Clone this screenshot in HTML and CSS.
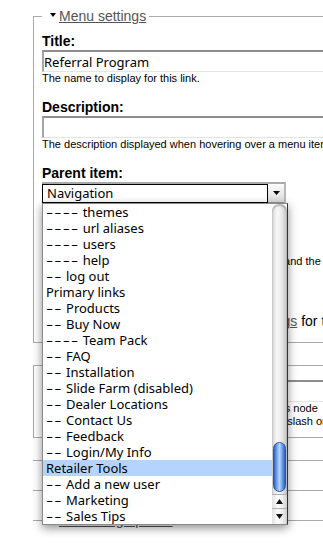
FILE: index.html
```html
<!DOCTYPE html>
<html lang="en">
<head>
    <meta charset="UTF-8">
    <meta name="viewport" content="width=device-width, initial-scale=1.0">
    <title>Menu settings</title>
    <link rel="stylesheet" href="styles.css">
</head>
<body>

    <div class="page">

        <fieldset class="group">
            <legend><a href="#">Menu settings</a></legend>

            <div class="field">
                <label for="title">Title:</label>
                <input type="text" id="title" class="form-text" value="Referral Program">
                <div class="description">The name to display for this link.</div>
            </div>

            <div class="field">
                <label for="desc">Description:</label>
                <input type="text" id="desc" class="form-text" value="">
                <div class="description">The description displayed when hovering over a menu item.</div>
            </div>

            <div class="field">
                <label>Parent item:</label>
                <div class="select-wrap">
                    <div class="select">
                        <span class="select-value">Navigation</span>
                        <span class="select-btn">
                            <svg width="7" height="4" viewBox="0 0 7 4"><path d="M0 0H7L3.5 4Z" fill="#000"/></svg>
                        </span>
                    </div>

                    <!-- Liste déroulante ouverte -->
                    <div class="popup">
                        <ul class="options">
                            <li><span class="dash">----</span> themes</li>
                            <li><span class="dash">----</span> url aliases</li>
                            <li><span class="dash">----</span> users</li>
                            <li><span class="dash">----</span> help</li>
                            <li><span class="dash">--</span> log out</li>
                            <li>Primary links</li>
                            <li><span class="dash">--</span> Products</li>
                            <li><span class="dash">--</span> Buy Now</li>
                            <li><span class="dash">----</span> Team Pack</li>
                            <li><span class="dash">--</span> FAQ</li>
                            <li><span class="dash">--</span> Installation</li>
                            <li><span class="dash">--</span> Slide Farm (disabled)</li>
                            <li><span class="dash">--</span> Dealer Locations</li>
                            <li><span class="dash">--</span> Contact Us</li>
                            <li><span class="dash">--</span> Feedback</li>
                            <li><span class="dash">--</span> Login/My Info</li>
                            <li class="selected">Retailer Tools</li>
                            <li><span class="dash">--</span> Add a new user</li>
                            <li><span class="dash">--</span> Marketing</li>
                            <li><span class="dash">--</span> Sales Tips</li>
                        </ul>
                        <div class="scrollbar">
                            <div class="track">
                                <div class="thumb"></div>
                            </div>
                            <div class="arrow arrow-up">
                                <svg width="7" height="5" viewBox="0 0 7 5"><path d="M0 5H7L3.5 0Z" fill="#111"/></svg>
                            </div>
                            <div class="arrow arrow-down">
                                <svg width="7" height="5" viewBox="0 0 7 5"><path d="M0 0H7L3.5 5Z" fill="#111"/></svg>
                            </div>
                        </div>
                    </div>
                </div>
            </div>

            <div class="field">
                <label>Weight:</label>
                <div class="select select-small">
                    <span class="select-value">0</span>
                    <span class="select-btn"></span>
                </div>
                <div class="description">Optional. In the menu, the heavier items will sink, and the lighter items will be positioned nearer the top.</div>
            </div>

            <div class="field">
                <label class="option"><input type="checkbox"> Delete</label>
            </div>

            <p class="note">Reorder these items in the <a href="#">menu settings</a> for this site.</p>
        </fieldset>

        <fieldset class="group group-path">
            <legend><a href="#">URL path settings</a></legend>
            <input type="text" class="form-text" value="">
            <div class="description">Optionally, specify an alternative URL by which this node<br>can be accessed, and please do not add a trailing slash or the URL alias won't work.</div>
        </fieldset>

        <fieldset class="group collapsed">
            <legend><a href="#">Comment settings</a></legend>
        </fieldset>

        <fieldset class="group collapsed">
            <legend><a href="#">Authoring information</a></legend>
        </fieldset>

        <fieldset class="group collapsed">
            <legend><a href="#">Publishing options</a></legend>
        </fieldset>

    </div>

</body>
</html>
```

FILE: styles.css
```css
/* Page de base */
html, body {
    margin: 0;
    overflow: hidden;
    background: #fff;
}

body {
    font-family: "Liberation Sans", Arial, sans-serif;
    font-size: 14px;
    line-height: 17px;
    color: #000;
}

.page {
    width: 700px;
    padding: 8px 0 0 33px;
}

/* Fieldsets */
.group {
    margin: 0 0 14px;
    padding: 9px 0 9px 8px;
    border: 1px solid #aaa;
    min-width: 0;
}

.group legend {
    padding: 0 3px 0 8px;
    font-size: 14px;
    line-height: 16px;
}

.group legend::before {
    content: "";
    display: inline-block;
    border-left: 3px solid transparent;
    border-right: 3px solid transparent;
    border-top: 4px solid #000;
    margin-right: 3px;
    vertical-align: 4px;
}

.group legend a {
    color: #555;
    text-decoration: underline;
}

.group-path {
    padding-top: 7px;
}

.group.collapsed {
    border-width: 1px 0 0;
    padding: 0 0 0 9px;
}

.group.collapsed legend::before {
    border-top: 3px solid transparent;
    border-bottom: 3px solid transparent;
    border-left: 4px solid #000;
    border-right: 0;
    margin-right: 5px;
    vertical-align: 3px;
}

/* Champs */
.field + .field {
    margin-top: 14px;
}

label {
    display: block;
    font-weight: bold;
    line-height: 17px;
}

label.option {
    font-weight: normal;
    height: 17px;
}

.form-text {
    display: block;
    box-sizing: border-box;
    width: 560px;
    height: 22px;
    margin: 0;
    padding: 0;
    border-style: solid;
    border-width: 2px 1px 1px 2px;
    border-color: #8e8e8e #c8c8c8 #e4e4e4 #a6a6a6;
    background: #fff;
    font-family: "Noto Sans", sans-serif;
    font-size: 13px;
    color: #000;
    outline: none;
}

.description {
    font-size: 11px;
    line-height: 13px;
    white-space: nowrap;
}

.note {
    margin: 14px 0 3px;
    white-space: nowrap;
}

.note a {
    color: #555;
    text-decoration: underline;
}

/* Liste déroulante */
.select-wrap {
    position: relative;
    width: 244px;
}

.select {
    display: flex;
    box-sizing: border-box;
    height: 21px;
    width: 244px;
    border-top: 2px solid #a9a9a9;
    border-right: 2px solid #b8b8b8;
}

.select-small {
    width: 60px;
}

.select-value {
    flex: 1;
    border: 1px solid #000;
    padding-left: 4px;
    font-family: "Noto Sans", sans-serif;
    font-size: 13px;
    line-height: 16px;
    white-space: nowrap;
    overflow: hidden;
}

.select-btn {
    width: 16px;
    display: flex;
    align-items: center;
    justify-content: center;
    background: linear-gradient(#fbfbfb, #dcdcdc);
    border-bottom: 1px solid #9a9a9a;
}

.popup {
    position: absolute;
    left: 0;
    top: 21px;
    z-index: 10;
    display: flex;
    box-sizing: border-box;
    width: 246px;
    height: 322px;
    background: #fff;
    border: 1px solid #8a8a8a;
    border-right-color: #333;
    box-shadow: 0 3px 9px rgba(0, 0, 0, 0.45);
}

.options {
    flex: 1;
    list-style: none;
    margin: 0;
    padding: 0;
    font-family: "Noto Sans", sans-serif;
    font-size: 13px;
    line-height: 16px;
}

.options li {
    height: 16px;
    padding-left: 3px;
    white-space: nowrap;
    overflow: hidden;
}

.options li.selected {
    background: #b5d4fd;
}

/* tirets longs et fins comme sur Mac */
.dash {
    display: inline-block;
    vertical-align: top;
    font-family: "DejaVu Sans", sans-serif;
    font-size: 20px;
    letter-spacing: 1.1px;
    transform: scaleY(0.65);
    transform-origin: 0 9.4px;
}

/* Barre de défilement */
.scrollbar {
    width: 15px;
    display: flex;
    flex-direction: column;
}

.track {
    flex: 1;
    display: flex;
    flex-direction: column;
    border-radius: 7px 7px 0 0;
    background: linear-gradient(to right, #d6d6d6, #f8f8f8 35%, #ececec 60%, #c2c2c2);
    box-shadow: inset 0 2px 2px rgba(0, 0, 0, 0.25);
}

.thumb {
    margin: auto 1px 2px;
    height: 50px;
    box-sizing: border-box;
    border: 1px solid #2a55a6;
    border-radius: 7px;
    background: linear-gradient(to right, #2f63c9, #7eacee 30%, #b8d6fb 50%, #7aa9ec 70%, #2c5fc5);
}

.arrow {
    display: flex;
    align-items: center;
    justify-content: center;
    box-sizing: border-box;
    border-top: 1px solid #b0b0b0;
    background: linear-gradient(to right, #e2e2e2, #fcfcfc 40%, #ededed 70%, #cfcfcf);
}

.arrow-up {
    height: 14px;
}

.arrow-down {
    height: 16px;
}
```
